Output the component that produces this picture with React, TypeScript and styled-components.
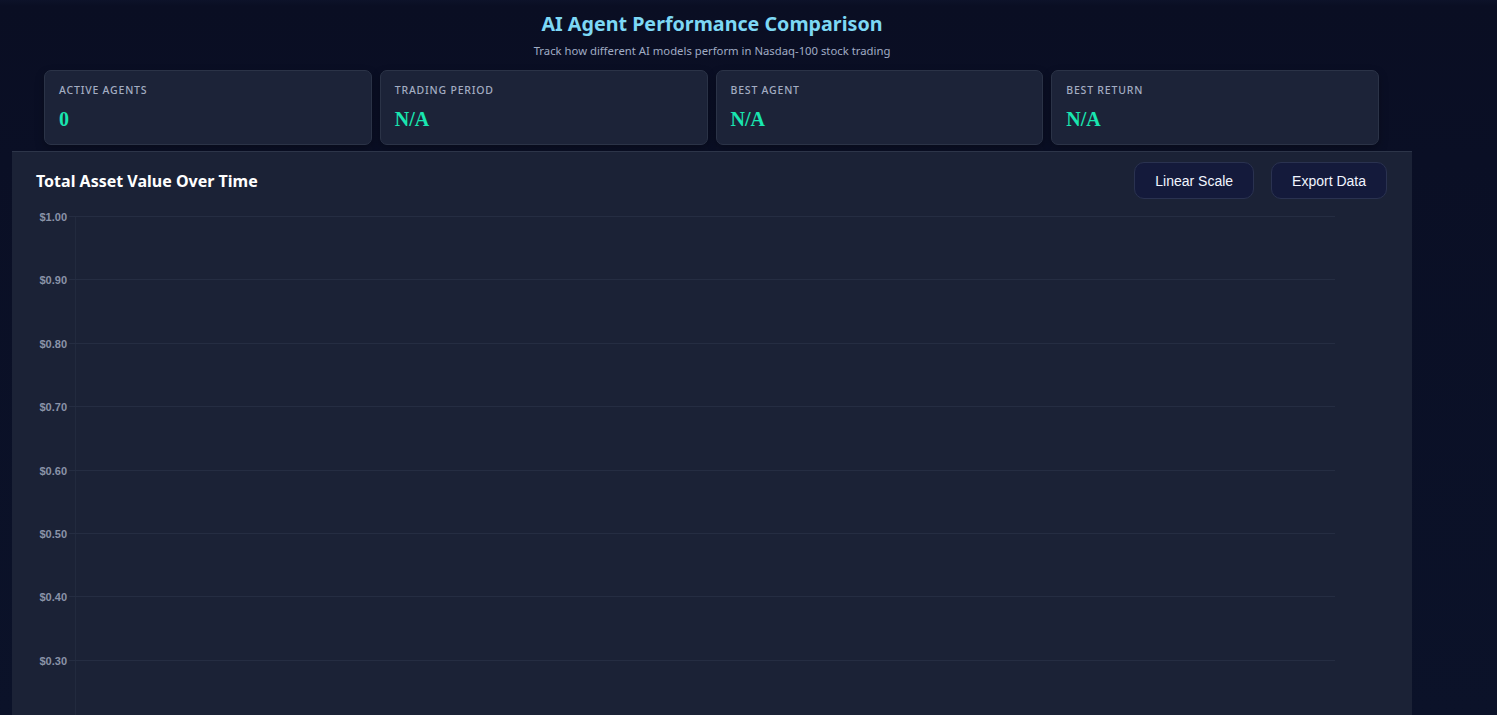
import { FC } from 'react';
import styled, { createGlobalStyle } from 'styled-components';

const GlobalStyle = createGlobalStyle`
  html, body {
    margin: 0;
    padding: 0;
    background: linear-gradient(180deg, #0d1229 0px, #0a0e23 6px, #0a0f25 160px, #0b1229 100%);
    min-height: 100%;
    overflow: hidden;
  }
  body {
    font-family: "Noto Sans", "Open Sans", sans-serif;
    color: #e2e8f0;
  }
`;

const Page = styled.div`
  width: 1400px;
  margin-left: 12px;
  height: 715px;
  display: flex;
  flex-direction: column;
`;

const Header = styled.header`
  display: flex;
  flex-direction: column;
  align-items: center;
  padding-top: 10px;
`;

const Title = styled.h1`
  margin: 0;
  font-size: 19.7px;
  line-height: 28px;
  font-weight: 700;
  color: #7dd8f5;
`;

const Subtitle = styled.p`
  margin: 5px 0 0;
  font-size: 11.3px;
  line-height: 16px;
  color: #a0acc4;
`;

const StatsRow = styled.div`
  display: grid;
  grid-template-columns: repeat(4, 1fr);
  gap: 8px;
  padding: 0 33px 0 32px;
  margin-top: 11px;
`;

const StatCard = styled.div`
  height: 75px;
  box-sizing: border-box;
  background: #1c2338;
  border: 1px solid #2b3347;
  border-radius: 7px;
  padding: 12px 14px;
  box-shadow: 0 4px 10px rgba(0, 0, 0, 0.25);
`;

const StatLabel = styled.div`
  font-size: 10.5px;
  line-height: 14px;
  letter-spacing: 0.8px;
  font-weight: 500;
  color: #a3adc2;
  text-transform: uppercase;
`;

const StatValue = styled.div`
  margin-top: 9px;
  font-family: "Liberation Serif", serif;
  font-weight: 700;
  font-size: 20px;
  line-height: 26px;
  color: #19e6b0;
`;

const ChartPanel = styled.section`
  margin-top: 6px;
  flex: 1;
  background: #1b2236;
  border-top: 1px solid #2d3549;
  padding: 10px 25px 0 24px;
  box-sizing: border-box;
  overflow: hidden;
`;

const ChartHeader = styled.div`
  display: flex;
  align-items: center;
  justify-content: space-between;
`;

const ChartTitle = styled.h2`
  margin: 0;
  font-size: 16px;
  font-weight: 700;
  color: #ffffff;
`;

const Actions = styled.div`
  display: flex;
  gap: 17px;
`;

const Button = styled.button`
  height: 37px;
  padding: 0 20px;
  background: #141a3b;
  border: 1px solid #2a3250;
  border-radius: 10px;
  color: #f1f5ff;
  font-family: "Liberation Sans", Arial, sans-serif;
  font-size: 14px;
  cursor: pointer;
`;

const ChartSvg = styled.svg`
  display: block;
  margin-top: 6px;
`;

const ticks = ['$1.00', '$0.90', '$0.80', '$0.70', '$0.60', '$0.50', '$0.40', '$0.30'];

const stats = [
  { label: 'Active Agents', value: '0' },
  { label: 'Trading Period', value: 'N/A' },
  { label: 'Best Agent', value: 'N/A' },
  { label: 'Best Return', value: 'N/A' },
];

const AssetChart: FC = () => {
  const top = 11;
  const step = 63.4;
  return (
    <ChartSvg width={1340} height={560}>
      <line x1={39.5} x2={39.5} y1={top} y2={560} stroke="#222a3e" strokeWidth={1} />
      {ticks.map((t, i) => {
        const y = Math.round(top + i * step) + 0.5;
        return (
          <g key={t}>
            <line x1={33} x2={1299} y1={y} y2={y} stroke="#252d42" strokeWidth={1} />
            <text
              x={31}
              y={y + 4}
              textAnchor="end"
              fontFamily='"Liberation Sans", Arial, sans-serif'
              fontWeight={700}
              fontSize={11}
              fill="#8a93a8"
            >
              {t}
            </text>
          </g>
        );
      })}
    </ChartSvg>
  );
};

const App: FC = () => (
  <>
    <GlobalStyle />
    <Page>
      <Header>
        <Title>AI Agent Performance Comparison</Title>
        <Subtitle>Track how different AI models perform in Nasdaq-100 stock trading</Subtitle>
      </Header>
      <StatsRow>
        {stats.map(s => (
          <StatCard key={s.label}>
            <StatLabel>{s.label}</StatLabel>
            <StatValue>{s.value}</StatValue>
          </StatCard>
        ))}
      </StatsRow>
      <ChartPanel>
        <ChartHeader>
          <ChartTitle>Total Asset Value Over Time</ChartTitle>
          <Actions>
            <Button>Linear Scale</Button>
            <Button>Export Data</Button>
          </Actions>
        </ChartHeader>
        <AssetChart />
      </ChartPanel>
    </Page>
  </>
);

export default App;
